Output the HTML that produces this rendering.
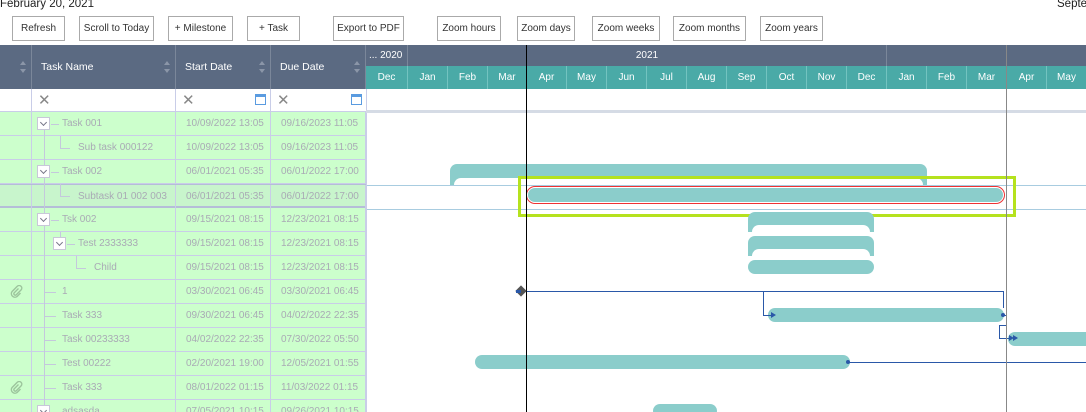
<!DOCTYPE html>
<html><head><meta charset="utf-8"><style>
*{box-sizing:border-box;margin:0;padding:0}
html,body{width:1086px;height:412px;overflow:hidden}
body{background:#fff;font-family:"Liberation Sans",sans-serif;font-size:11px;position:relative;color:#222}
.a{position:absolute}
.btn{position:absolute;top:16px;height:25px;border:1px solid #aaa;background:#fff;font-size:10px;color:#333;text-align:center;line-height:23px}
.hd{position:absolute;top:45px;height:44px;background:#5b6a82;color:#fff;font-size:10.5px;line-height:44px;padding-left:9px;border-right:1px solid #7b879a}
.sort{position:absolute;right:5px;top:16px;width:6px;height:12px}
.sort:before{content:"";position:absolute;left:0;top:0;border-left:3px solid transparent;border-right:3px solid transparent;border-bottom:4px solid #8b96a8}
.sort:after{content:"";position:absolute;left:0;bottom:0;border-left:3px solid transparent;border-right:3px solid transparent;border-top:4px solid #8b96a8}
.row{position:absolute;left:0;width:366px;height:24px;background:#ccffcc;border-bottom:1px solid #c9cde8}
.c{position:absolute;top:0;height:23px;line-height:23px;color:#a9aab5;font-size:10px;border-right:1px solid #c9cde8}
.mo{position:absolute;top:66px;height:23px;line-height:23px;text-align:center;color:#fff;font-size:10px;background:#4aaaa7;border-right:1px solid #73c3c0}
.bar{position:absolute;background:#8bcdcb;border-radius:7px}
.par{position:absolute;background:#8bcdcb;border-radius:7px 7px 0 0}
.par i{position:absolute;left:4px;right:4px;bottom:0;height:7px;background:#fff;border-radius:7px 7px 0 0}
.tog{position:absolute;width:13px;height:13px;border:1px solid #c8c8d8;background:#fff;top:5px;z-index:2}
.tog:after{content:"";position:absolute;left:3px;top:2px;width:4px;height:4px;border-right:1px solid #778;border-bottom:1px solid #778;transform:rotate(45deg)}
.ln{position:absolute;background:#2a58a8}
.tl{position:absolute;background:#c4c8dc}
</style></head><body>
<div class="a" style="left:0;top:-2px;font-size:11.5px">February 20, 2021</div>
<div class="a" style="left:1057px;top:-2px;font-size:11.5px">Septe</div>
<div class="btn" style="left:12px;width:53px">Refresh</div>
<div class="btn" style="left:79px;width:75px">Scroll to Today</div>
<div class="btn" style="left:168px;width:65px">+ Milestone</div>
<div class="btn" style="left:247px;width:53px">+ Task</div>
<div class="btn" style="left:333px;width:71px">Export to PDF</div>
<div class="btn" style="left:437px;width:64px">Zoom hours</div>
<div class="btn" style="left:517px;width:58px">Zoom days</div>
<div class="btn" style="left:592px;width:68px">Zoom weeks</div>
<div class="btn" style="left:673px;width:73px">Zoom months</div>
<div class="btn" style="left:760px;width:63px">Zoom years</div>

<div class="hd" style="left:0;width:32px"><span class="sort"></span></div>
<div class="hd" style="left:32px;width:144px">Task Name<span class="sort"></span></div>
<div class="hd" style="left:176px;width:95px">Start Date<span class="sort"></span></div>
<div class="hd" style="left:271px;width:95px">Due Date<span class="sort"></span></div>
<div class="a" style="left:366px;top:45px;width:720px;height:21px;background:#5b6a82"></div>
<div class="a" style="left:366px;top:45px;width:42px;height:21px;border-right:1px solid #7b879a;color:#fff;font-size:10px;line-height:21px;padding-left:3px">... 2020</div>
<div class="a" style="left:408px;top:45px;width:479px;height:21px;border-right:1px solid #7b879a;color:#fff;font-size:10px;line-height:21px;text-align:center">2021</div>
<div class="a" style="left:887px;top:45px;width:120px;height:21px;border-right:1px solid #7b879a"></div>
<div class="mo" style="left:366px;width:42px">Dec</div><div class="mo" style="left:408px;width:40px">Jan</div><div class="mo" style="left:448px;width:40px">Feb</div><div class="mo" style="left:488px;width:39px">Mar</div><div class="mo" style="left:527px;width:40px">Apr</div><div class="mo" style="left:567px;width:40px">May</div><div class="mo" style="left:607px;width:40px">Jun</div><div class="mo" style="left:647px;width:40px">Jul</div><div class="mo" style="left:687px;width:40px">Aug</div><div class="mo" style="left:727px;width:40px">Sep</div><div class="mo" style="left:767px;width:40px">Oct</div><div class="mo" style="left:807px;width:40px">Nov</div><div class="mo" style="left:847px;width:40px">Dec</div><div class="mo" style="left:887px;width:40px">Jan</div><div class="mo" style="left:927px;width:40px">Feb</div><div class="mo" style="left:967px;width:40px">Mar</div><div class="mo" style="left:1007px;width:40px">Apr</div><div class="mo" style="left:1047px;width:40px">May</div>

<div class="a" style="left:0;top:89px;width:366px;height:23px;background:#fff;border-bottom:1px solid #c9cde8"></div>
<div class="a" style="left:31px;top:89px;width:1px;height:23px;background:#c9cde8"></div>
<div class="a" style="left:175px;top:89px;width:1px;height:23px;background:#c9cde8"></div>
<div class="a" style="left:270px;top:89px;width:1px;height:23px;background:#c9cde8"></div>
<div class="a" style="left:366px;top:89px;width:1px;height:323px;background:#c9cde8"></div>
<div class="a" style="left:38px;top:91px;color:#888;font-size:15px">✕</div>
<div class="a" style="left:182px;top:91px;color:#888;font-size:15px">✕</div>
<div class="a" style="left:277px;top:91px;color:#888;font-size:15px">✕</div>
<div class="a" style="left:255px;top:94px;width:11px;height:11px;border:1px solid #5a9be0;border-top-width:3px"></div>
<div class="a" style="left:351px;top:94px;width:11px;height:11px;border:1px solid #5a9be0;border-top-width:3px"></div>
<div class="a" style="left:366px;top:110px;width:720px;height:3px;background:#d5dbe5"></div>

<div class="row" style="top:112px"><div class="c" style="left:0;width:32px"></div><div class="c" style="left:32px;width:144px"><span class="tog" style="left:5px"></span><span style="position:absolute;left:30px">Task 001</span></div><div class="c" style="left:176px;width:95px;padding-left:10px">10/09/2022 13:05</div><div class="c" style="left:271px;width:95px;padding-left:10px">09/16/2023 11:05</div></div>
<div class="row" style="top:136px"><div class="c" style="left:0;width:32px"></div><div class="c" style="left:32px;width:144px"><span style="position:absolute;left:46px">Sub task 000122</span></div><div class="c" style="left:176px;width:95px;padding-left:10px">10/09/2022 13:05</div><div class="c" style="left:271px;width:95px;padding-left:10px">09/16/2023 11:05</div></div>
<div class="row" style="top:160px"><div class="c" style="left:0;width:32px"></div><div class="c" style="left:32px;width:144px"><span class="tog" style="left:5px"></span><span style="position:absolute;left:30px">Task 002</span></div><div class="c" style="left:176px;width:95px;padding-left:10px">06/01/2021 05:35</div><div class="c" style="left:271px;width:95px;padding-left:10px">06/01/2022 17:00</div></div>
<div class="row" style="top:184px;background:#c8f5cc;border-top:1px solid #b5bdd8;border-bottom:2px solid #b5bdd8"><div class="c" style="left:0;width:32px"></div><div class="c" style="left:32px;width:144px"><span style="position:absolute;left:46px">Subtask 01 002 003</span></div><div class="c" style="left:176px;width:95px;padding-left:10px">06/01/2021 05:35</div><div class="c" style="left:271px;width:95px;padding-left:10px">06/01/2022 17:00</div></div>
<div class="row" style="top:208px"><div class="c" style="left:0;width:32px"></div><div class="c" style="left:32px;width:144px"><span class="tog" style="left:5px"></span><span style="position:absolute;left:30px">Tsk 002</span></div><div class="c" style="left:176px;width:95px;padding-left:10px">09/15/2021 08:15</div><div class="c" style="left:271px;width:95px;padding-left:10px">12/23/2021 08:15</div></div>
<div class="row" style="top:232px"><div class="c" style="left:0;width:32px"></div><div class="c" style="left:32px;width:144px"><span class="tog" style="left:21px"></span><span style="position:absolute;left:46px">Test 2333333</span></div><div class="c" style="left:176px;width:95px;padding-left:10px">09/15/2021 08:15</div><div class="c" style="left:271px;width:95px;padding-left:10px">12/23/2021 08:15</div></div>
<div class="row" style="top:256px"><div class="c" style="left:0;width:32px"></div><div class="c" style="left:32px;width:144px"><span style="position:absolute;left:62px">Child</span></div><div class="c" style="left:176px;width:95px;padding-left:10px">09/15/2021 08:15</div><div class="c" style="left:271px;width:95px;padding-left:10px">12/23/2021 08:15</div></div>
<div class="row" style="top:280px"><div class="c" style="left:0;width:32px"><svg style="position:absolute;left:10px;top:5px" width="13" height="13" viewBox="0 0 13 13"><path d="M8.5 3.5 L4 8 a1.5 1.5 0 0 0 2 2 L11 5 a2.6 2.6 0 0 0 -3.7 -3.7 L2 6.6 a3.6 3.6 0 0 0 5 5 L10.5 8" fill="none" stroke="#9cc49c" stroke-width="1.4"/></svg></div><div class="c" style="left:32px;width:144px"><span style="position:absolute;left:30px">1</span></div><div class="c" style="left:176px;width:95px;padding-left:10px">03/30/2021 06:45</div><div class="c" style="left:271px;width:95px;padding-left:10px">03/30/2021 06:45</div></div>
<div class="row" style="top:304px"><div class="c" style="left:0;width:32px"></div><div class="c" style="left:32px;width:144px"><span style="position:absolute;left:30px">Task 333</span></div><div class="c" style="left:176px;width:95px;padding-left:10px">09/30/2021 06:45</div><div class="c" style="left:271px;width:95px;padding-left:10px">04/02/2022 22:35</div></div>
<div class="row" style="top:328px"><div class="c" style="left:0;width:32px"></div><div class="c" style="left:32px;width:144px"><span style="position:absolute;left:30px">Task 00233333</span></div><div class="c" style="left:176px;width:95px;padding-left:10px">04/02/2022 22:35</div><div class="c" style="left:271px;width:95px;padding-left:10px">07/30/2022 05:50</div></div>
<div class="row" style="top:352px"><div class="c" style="left:0;width:32px"></div><div class="c" style="left:32px;width:144px"><span style="position:absolute;left:30px">Test 00222</span></div><div class="c" style="left:176px;width:95px;padding-left:10px">02/20/2021 19:00</div><div class="c" style="left:271px;width:95px;padding-left:10px">12/05/2021 01:55</div></div>
<div class="row" style="top:376px"><div class="c" style="left:0;width:32px"><svg style="position:absolute;left:10px;top:5px" width="13" height="13" viewBox="0 0 13 13"><path d="M8.5 3.5 L4 8 a1.5 1.5 0 0 0 2 2 L11 5 a2.6 2.6 0 0 0 -3.7 -3.7 L2 6.6 a3.6 3.6 0 0 0 5 5 L10.5 8" fill="none" stroke="#9cc49c" stroke-width="1.4"/></svg></div><div class="c" style="left:32px;width:144px"><span style="position:absolute;left:30px">Task 333</span></div><div class="c" style="left:176px;width:95px;padding-left:10px">08/01/2022 01:15</div><div class="c" style="left:271px;width:95px;padding-left:10px">11/03/2022 01:15</div></div>
<div class="row" style="top:400px"><div class="c" style="left:0;width:32px"></div><div class="c" style="left:32px;width:144px"><span class="tog" style="left:5px"></span><span style="position:absolute;left:30px">adsasda</span></div><div class="c" style="left:176px;width:95px;padding-left:10px">07/05/2021 10:15</div><div class="c" style="left:271px;width:95px;padding-left:10px">09/26/2021 10:15</div></div>

<!-- tree lines -->
<div class="tl" style="left:44px;top:118px;width:1px;height:294px"></div>
<div class="tl" style="left:51px;top:124px;width:8px;height:1px"></div>
<div class="tl" style="left:60px;top:136px;width:1px;height:12px"></div>
<div class="tl" style="left:60px;top:148px;width:10px;height:1px"></div>
<div class="tl" style="left:51px;top:172px;width:8px;height:1px"></div>
<div class="tl" style="left:60px;top:184px;width:1px;height:12px"></div>
<div class="tl" style="left:60px;top:196px;width:10px;height:1px"></div>
<div class="tl" style="left:51px;top:220px;width:8px;height:1px"></div>
<div class="tl" style="left:60px;top:232px;width:1px;height:6px"></div>
<div class="tl" style="left:67px;top:244px;width:8px;height:1px"></div>
<div class="tl" style="left:76px;top:256px;width:1px;height:12px"></div>
<div class="tl" style="left:76px;top:268px;width:10px;height:1px"></div>
<div class="tl" style="left:44px;top:292px;width:12px;height:1px"></div>
<div class="tl" style="left:44px;top:316px;width:12px;height:1px"></div>
<div class="tl" style="left:44px;top:340px;width:12px;height:1px"></div>
<div class="tl" style="left:44px;top:364px;width:12px;height:1px"></div>
<div class="tl" style="left:44px;top:388px;width:12px;height:1px"></div>

<!-- chart -->
<div class="a" style="left:367px;top:185px;width:719px;height:1px;background:#a8cce0"></div>
<div class="a" style="left:367px;top:209px;width:719px;height:1px;background:#a8cce0"></div>
<div class="par" style="left:450px;top:164px;width:477px;height:21px"><i></i></div>
<div class="a" style="left:526px;top:186px;width:479px;height:18px;border:1px solid #e33;border-radius:9px;background:#fff"></div>
<div class="bar" style="left:528px;top:188px;width:475px;height:14px"></div>
<div class="a" style="left:518px;top:176px;width:498px;height:41px;border:3px solid #b5e21e"></div>
<div class="par" style="left:748px;top:212px;width:126px;height:20px"><i></i></div>
<div class="par" style="left:748px;top:236px;width:126px;height:20px"><i></i></div>
<div class="bar" style="left:748px;top:260px;width:126px;height:14px"></div>
<div class="bar" style="left:768px;top:308px;width:236px;height:14px"></div>
<div class="bar" style="left:1008px;top:332px;width:90px;height:14px"></div>
<div class="bar" style="left:475px;top:355px;width:375px;height:14px"></div>
<div class="bar" style="left:653px;top:404px;width:64px;height:14px"></div>
<div class="ln" style="left:522px;top:291px;width:482px;height:1px"></div>
<div class="ln" style="left:1003px;top:291px;width:1px;height:17px"></div>
<div class="ln" style="left:763px;top:291px;width:1px;height:24px"></div>
<div class="ln" style="left:763px;top:315px;width:8px;height:1px"></div>
<div class="a" style="left:771px;top:312px;border-top:3px solid transparent;border-bottom:3px solid transparent;border-left:5px solid #2a58a8"></div>
<div class="ln" style="left:1002px;top:315px;width:5px;height:1px"></div>
<div class="ln" style="left:1006px;top:315px;width:1px;height:10px"></div>
<div class="ln" style="left:999px;top:325px;width:8px;height:1px"></div>
<div class="ln" style="left:999px;top:325px;width:1px;height:13px"></div>
<div class="ln" style="left:999px;top:338px;width:10px;height:1px"></div>
<div class="a" style="left:1009px;top:335px;border-top:3px solid transparent;border-bottom:3px solid transparent;border-left:5px solid #2a58a8"></div>
<div class="a" style="left:1013px;top:335px;border-top:3px solid transparent;border-bottom:3px solid transparent;border-left:5px solid #2a58a8"></div>
<div class="ln" style="left:848px;top:362px;width:238px;height:1px"></div>
<div class="a" style="left:846px;top:360px;width:4px;height:4px;border-radius:2px;background:#2a58a8"></div>
<div class="a" style="left:1001px;top:313px;width:4px;height:4px;border-radius:2px;background:#2a58a8"></div>
<div class="a" style="left:526px;top:45px;width:1px;height:367px;background:#000"></div>
<div class="a" style="left:1006px;top:45px;width:1px;height:367px;background:#888"></div>
<div class="a" style="left:517px;top:287px;width:8px;height:8px;background:#555;transform:rotate(45deg)"></div>
<div class="a" style="left:516px;top:290px;width:5px;height:3px;background:#2a58a8"></div>
</body></html>
